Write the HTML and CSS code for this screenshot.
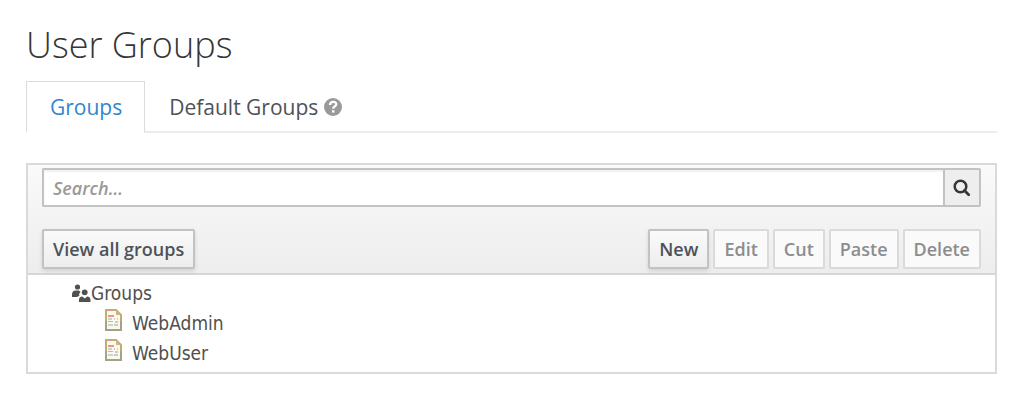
FILE: index.html
```html
<!DOCTYPE html>
<html lang="en">
<head>
    <meta charset="UTF-8">
    <meta name="viewport" content="width=device-width, initial-scale=1.0">
    <title>User Groups</title>
    <link rel="stylesheet" href="styles.css">
</head>
<body>
    <!-- Document icon shared by the tree leaves -->
    <svg class="sprite" aria-hidden="true">
        <symbol id="icon-doc" viewBox="0 0 17 22">
            <path d="M1 1h10l5 5v15H1z" fill="#fbf8f0"/>
            <path d="M1 12V1h10l5 5v6" fill="none" stroke="#c3ab72" stroke-width="2"/>
            <path d="M1 12v9h15v-9" fill="none" stroke="#a5a187" stroke-width="2"/>
            <path d="M11 1v5h5z" fill="#c9b57d"/>
            <path d="M3 7h6" stroke="#f2908c" stroke-width="2"/>
            <path d="M3 12.500h5" stroke="#f2a09a" stroke-width="1"/>
            <path d="M3 10h4M3 16h5" stroke="#86bda4" stroke-width="1"/>
            <path d="M9 10h1M12 10h1M10 13h3M9 16h4" stroke="#9a9e98" stroke-width="1"/>
        </symbol>
    </svg>

    <div class="container">
        <h1>User Groups</h1>

        <nav class="tabs">
            <a href="#groups" class="tab active">Groups</a>
            <a href="#default-groups" class="tab">Default Groups
                <svg class="icon-help" viewBox="0 0 18 18" aria-hidden="true">
                    <circle cx="9" cy="9" r="9" fill="#999"/>
                    <path d="M6 7c0-4 6.300-4 6.300-.8C12.300 8.400 9.200 8.200 9.200 10.800" fill="none" stroke="#fff" stroke-width="2.300"/>
                    <path d="M8 12.200h2.400v2.400H8z" fill="#fff"/>
                </svg>
            </a>
        </nav>

        <div class="panel">
            <div class="panel-head">
                <form class="search">
                    <input type="text" placeholder="Search..." aria-label="Search">
                    <button type="button" aria-label="Search">
                        <svg class="icon-search" viewBox="0 0 18 18" aria-hidden="true">
                            <circle cx="7.500" cy="7.500" r="5.800" fill="none" stroke="#363636" stroke-width="2.500"/>
                            <path d="M11.500 11.500l4.200 4.200" stroke="#363636" stroke-width="2.800" stroke-linecap="round"/>
                        </svg>
                    </button>
                </form>
                <div class="toolbar">
                    <button type="button" class="btn">View all groups</button>
                    <div class="actions">
                        <button type="button" class="btn">New</button>
                        <button type="button" class="btn" disabled>Edit</button>
                        <button type="button" class="btn" disabled>Cut</button>
                        <button type="button" class="btn" disabled>Paste</button>
                        <button type="button" class="btn" disabled>Delete</button>
                    </div>
                </div>
            </div>

            <ul class="tree">
                <li>
                    <div class="node">
                        <svg class="icon-users" viewBox="0 0 19 19" aria-hidden="true">
                            <g fill="#505050">
                                <circle cx="5.500" cy="3" r="2.600"/>
                                <path d="M0 13V10.500Q0 6.500 4 6.500h3l1.500 1.500-1.500 2 .5 1.500-2.500 1.500z"/>
                                <circle cx="12.700" cy="8.300" r="2.900"/>
                                <path d="M7 18v-2q0-3.500 3.300-3.500l2.400 2 2.400-2q3.400 0 3.400 3.500v2z"/>
                            </g>
                        </svg>
                        <span>Groups</span>
                    </div>
                    <ul>
                        <li class="node"><svg class="icon-doc" aria-hidden="true"><use href="#icon-doc"/></svg><span>WebAdmin</span></li>
                        <li class="node"><svg class="icon-doc" aria-hidden="true"><use href="#icon-doc"/></svg><span>WebUser</span></li>
                    </ul>
                </li>
            </ul>
        </div>
    </div>
</body>
</html>
```
FILE: styles.css
```css
* {
    box-sizing: border-box;
}

body {
    margin: 0;
    background: #fff;
    color: #4d5258;
    font-family: "Open Sans", sans-serif;
    font-size: 18px;
}

.sprite {
    display: none;
}

.container {
    padding: 19px 27px 38px 26px;
}

h1 {
    margin: 0 0 10px;
    color: #363636;
    font-size: 36px;
    font-weight: 300;
    line-height: 52px;
}

.tabs {
    display: flex;
    margin-bottom: 30px;
    border-bottom: 2px solid #ececec;
}

.tab {
    display: flex;
    align-items: center;
    gap: 6px;
    margin-bottom: -2px;
    padding: 0 22px 0 23px;
    border: 1px solid transparent;
    color: #4d5258;
    font-size: 21px;
    line-height: 50px;
    text-decoration: none;
}

.tab.active {
    border-color: #dcdcdc;
    border-bottom-color: #fff;
    background: #fff;
    color: #2e87cf;
}

.icon-help {
    width: 18px;
    height: 18px;
}

.panel {
    border: 2px solid #dadada;
}

.panel-head {
    padding: 3px 14px 4px;
    border-bottom: 2px solid #d6d6d6;
    background: linear-gradient(to bottom, #fafafa, #ededed);
}

.search {
    display: flex;
    margin-bottom: 22px;
}

.search input {
    flex: 1;
    min-width: 0;
    height: 39px;
    padding: 0 9px;
    border: 2px solid #c2c2c2;
    border-right: 0;
    border-radius: 2px 0 0 2px;
    background: #fff;
    box-shadow: inset 0 2px 2px rgba(0, 0, 0, 0.06);
    color: #333;
    font-family: inherit;
    font-size: 18px;
}

.search input::placeholder {
    color: #999;
    font-style: italic;
    font-weight: 600;
}

.search button {
    display: flex;
    align-items: center;
    justify-content: center;
    width: 38px;
    padding: 0;
    border: 2px solid #c2c2c2;
    border-radius: 0 2px 2px 0;
    background: #eee;
}

.icon-search {
    width: 18px;
    height: 18px;
}

.toolbar {
    display: flex;
    justify-content: space-between;
}

.actions {
    display: flex;
    gap: 4px;
}

.btn {
    height: 40px;
    padding: 0 9px;
    border: 2px solid #c2c2c2;
    border-radius: 2px;
    background: linear-gradient(to bottom, #fafafa, #ededed);
    box-shadow: 0 2px 4px rgba(0, 0, 0, 0.12);
    color: #4d5258;
    font-family: inherit;
    font-size: 18px;
    font-weight: 600;
    cursor: pointer;
}

.btn:disabled {
    border-color: #dadada;
    background: #fafafa;
    box-shadow: none;
    color: #8b8d8f;
    cursor: default;
}

/* Group tree */
.tree,
.tree ul {
    margin: 0;
    padding: 0;
    list-style: none;
}

.tree {
    padding: 3px 0 4px 44px;
    color: #505050;
    font-family: "DejaVu Sans Condensed", "DejaVu Sans", sans-serif;
    font-size: 19px;
}

.tree ul {
    padding-left: 33px;
}

.node {
    display: flex;
    align-items: center;
    height: 30px;
}

.icon-users {
    width: 19px;
    height: 19px;
}

.icon-doc {
    width: 17px;
    height: 22px;
    margin: 0 10px 6px 0;
}
```
